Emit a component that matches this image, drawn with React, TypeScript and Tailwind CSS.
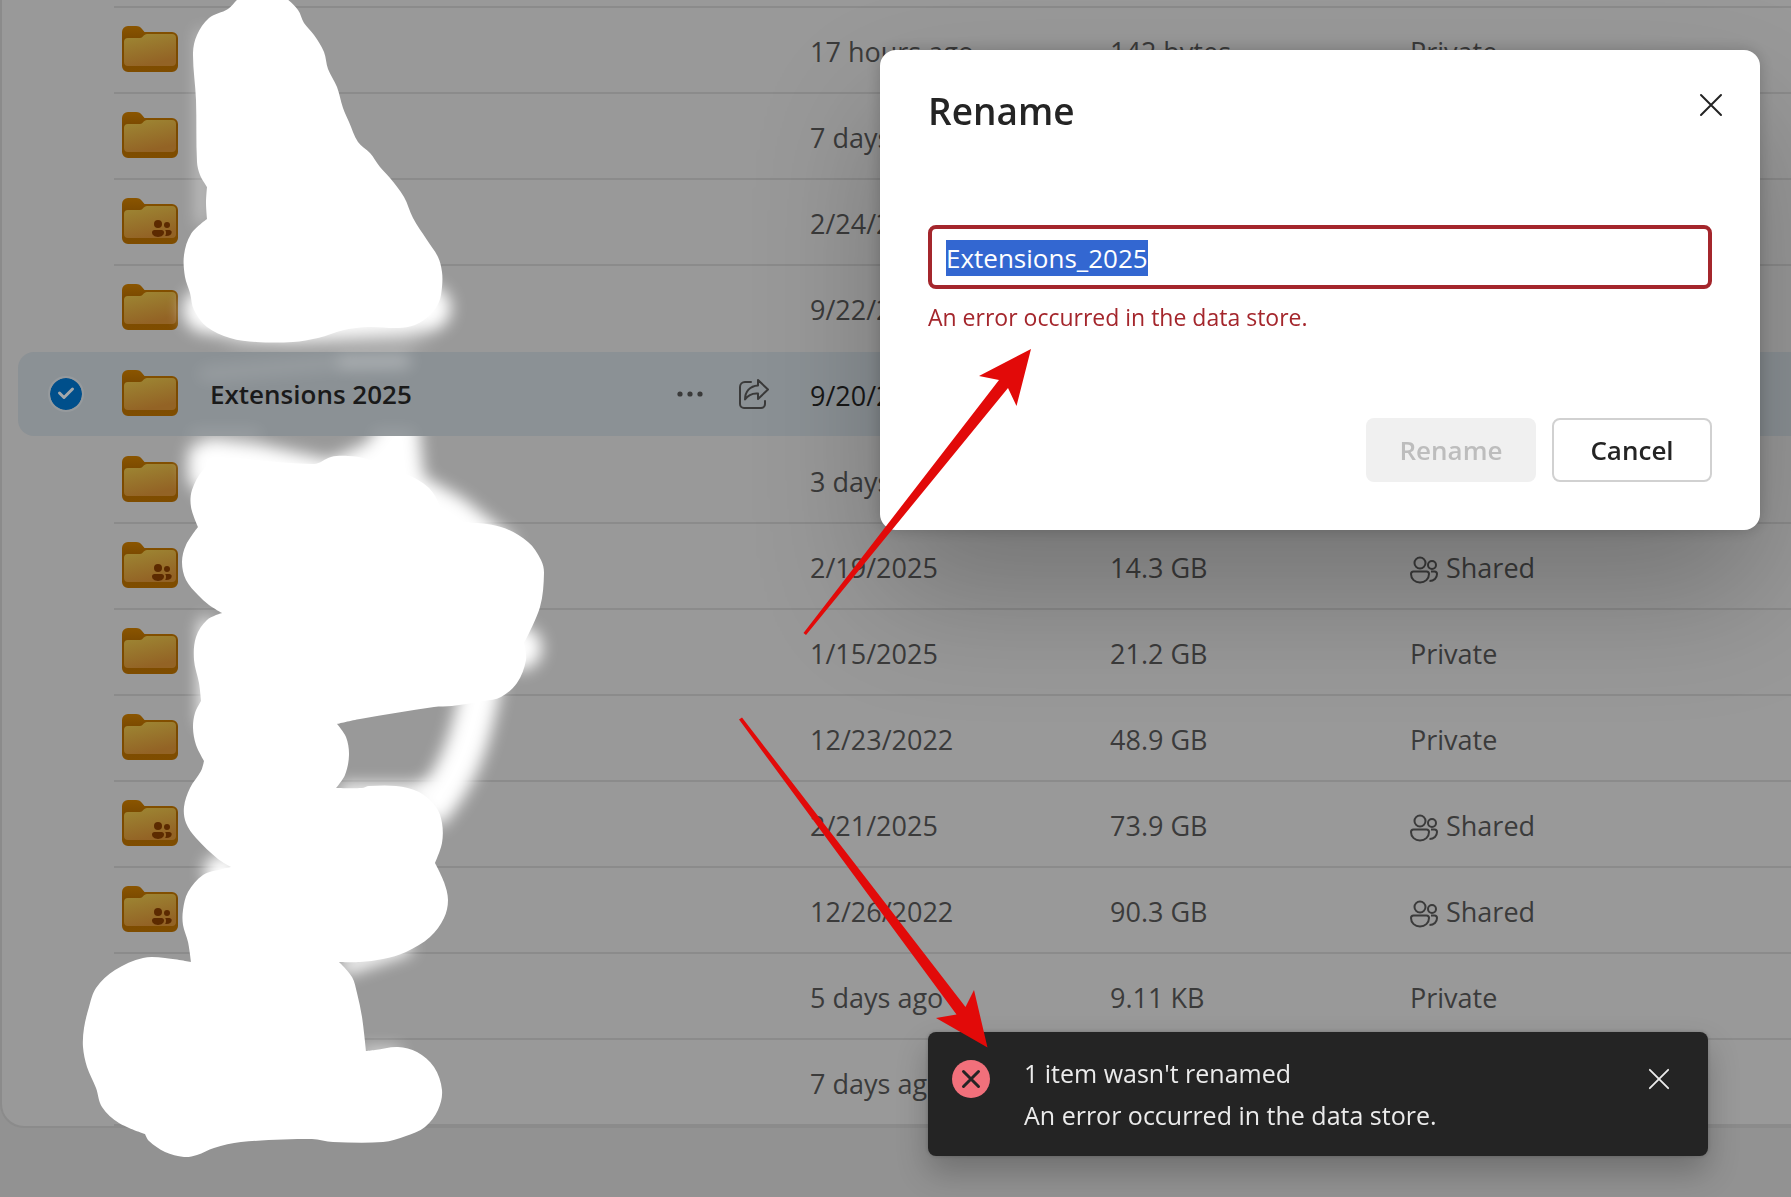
import { useEffect, useRef } from "react";

type Row = {
  name?: string;
  modified: string;
  size?: string;
  sharing?: "Private" | "Shared";
  shared?: boolean;
  selected?: boolean;
  covered?: boolean;
};

const rows: Row[] = [
  { modified: "17 hours ago", size: "142 bytes", sharing: "Private" },
  { modified: "7 days ago" },
  { modified: "2/24/2025", shared: true },
  { modified: "9/22/2025" },
  { name: "Extensions 2025", modified: "9/20/2025", selected: true },
  { modified: "3 days ago" },
  { modified: "2/19/2025", size: "14.3 GB", sharing: "Shared", shared: true },
  { modified: "1/15/2025", size: "21.2 GB", sharing: "Private" },
  { modified: "12/23/2022", size: "48.9 GB", sharing: "Private" },
  { modified: "2/21/2025", size: "73.9 GB", sharing: "Shared", shared: true },
  { modified: "12/26/2022", size: "90.3 GB", sharing: "Shared", shared: true },
  { modified: "5 days ago", size: "9.11 KB", sharing: "Private", covered: true },
  { modified: "7 days ago", covered: true },
];

type Point = [number, number];

const upperBlob: Point[] = [
  [228, 9], [241, -3], [263, -8], [285, -2], [298, 10], [304, 23], [314, 35], [324, 52], [328, 69], [337, 87],
  [343, 108], [349, 122], [358, 142], [370, 153], [380, 167], [390, 178], [404, 197], [413, 218], [427, 240],
  [438, 257], [442, 272], [442, 287], [439, 302], [430, 315], [415, 325], [398, 328], [369, 327], [344, 330],
  [318, 338], [293, 342], [256, 342], [230, 338], [207, 327], [194, 310], [190, 293], [185, 277], [184, 255],
  [191, 234], [207, 219], [206, 203], [207, 187], [200, 175], [197, 162], [196, 100], [193, 53], [197, 35],
  [209, 18],
];

const lowerBlob: Point[] = [
  [230, 458], [314, 464], [331, 457], [348, 456], [367, 459], [383, 468], [406, 474], [429, 488], [440, 507],
  [442, 522], [463, 522], [501, 527], [528, 542], [541, 560], [544, 573], [540, 607], [524, 643], [526, 660],
  [517, 683], [501, 697], [484, 701], [452, 706], [434, 707], [360, 719], [337, 724], [346, 737], [349, 755],
  [345, 775], [336, 788], [362, 788], [369, 786], [396, 786], [419, 792], [436, 807], [442, 823], [442, 843],
  [435, 863], [444, 882], [448, 900], [444, 918], [430, 937], [406, 952], [383, 959], [360, 962], [339, 962],
  [352, 977], [357, 993], [362, 1017], [366, 1051], [375, 1050], [398, 1047], [417, 1052], [434, 1067],
  [442, 1090], [438, 1110], [425, 1127], [406, 1136], [383, 1142], [333, 1142], [312, 1139], [241, 1142],
  [214, 1148], [197, 1155], [184, 1157], [165, 1152], [149, 1141], [145, 1134], [119, 1123], [102, 1107],
  [96, 1088], [87, 1067], [83, 1047], [84, 1028], [89, 1007], [96, 988], [115, 970], [143, 958], [165, 958],
  [191, 962], [188, 942], [183, 925], [183, 910], [188, 892], [203, 875], [222, 869], [231, 867], [218, 859],
  [196, 838], [186, 823], [184, 807], [190, 788], [201, 771], [204, 761], [196, 745], [193, 728], [195, 713],
  [201, 701], [199, 683], [194, 660], [196, 637], [207, 620], [222, 613], [209, 605], [198, 595], [186, 580],
  [182, 562], [186, 545], [198, 527], [191, 507], [192, 490], [203, 470], [218, 460],
];

/* Closed curve through every point; sharp inward notches stay as corners. */
function smoothPath(points: Point[]) {
  const n = points.length;
  const at = (i: number) => points[(i + n) % n];
  const tangent = (i: number): Point => {
    const [a, b, c] = [at(i - 1), at(i), at(i + 1)];
    const [ux, uy, vx, vy] = [b[0] - a[0], b[1] - a[1], c[0] - b[0], c[1] - b[1]];
    const turn = Math.atan2(ux * vy - uy * vx, ux * vx + uy * vy);
    if (turn < -0.5) return [0, 0];
    const l = Math.hypot(c[0] - a[0], c[1] - a[1]) || 1;
    return [(c[0] - a[0]) / l, (c[1] - a[1]) / l];
  };
  let d = `M${points[0][0]} ${points[0][1]}`;
  for (let i = 0; i < n; i++) {
    const [p1, p2] = [at(i), at(i + 1)];
    const k = Math.hypot(p2[0] - p1[0], p2[1] - p1[1]) / 3;
    const [t1, t2] = [tangent(i), tangent(i + 1)];
    d += `C${p1[0] + t1[0] * k} ${p1[1] + t1[1] * k} ${p2[0] - t2[0] * k} ${p2[1] - t2[1] * k} ${p2[0]} ${p2[1]}`;
  }
  return d + "Z";
}

function FolderIcon({ shared }: { shared?: boolean }) {
  return (
    <svg width="56" height="46" viewBox="0 0 56 46" aria-hidden="true" className="mb-0.5 shrink-0">
      <defs>
        <linearGradient id="folder-front" x1="0" y1="0" x2="0.35" y2="1">
          <stop offset="0" stopColor="#9e8834" />
          <stop offset="1" stopColor="#936325" />
        </linearGradient>
        <linearGradient id="folder-back" x1="0" y1="0" x2="0" y2="1">
          <stop offset="0" stopColor="#8a5500" />
          <stop offset="0.3" stopColor="#7a4900" />
          <stop offset="1" stopColor="#7f4d00" />
        </linearGradient>
      </defs>
      <path d="M0 6a6 6 0 0 1 6-6h8c3 0 4.6 1 6 3l2.5 3H50a6 6 0 0 1 6 6v28a6 6 0 0 1-6 6H6a6 6 0 0 1-6-6z" fill="url(#folder-back)" />
      <path d="M2 16a4 4 0 0 1 4-4h12c3 0 3.5-4 7-4h25a4 4 0 0 1 4 4v28H54v-4a4 4 0 0 1-4 4H6a4 4 0 0 1-4-4z" fill="url(#folder-front)" />
      {shared && (
        <g fill="#5c2a00">
          <circle cx="36" cy="26" r="4" />
          <circle cx="45" cy="27" r="3" />
          <path d="M32.5 32h7c1.500 0 2.500 1 2.500 2.300C42 37 39.500 39 36 39s-6-2-6-4.700C30 33 31 32 32.500 32z" />
          <path d="M43.2 32h4c1.500 0 2.500 1 2.500 2.200 0 2.300-2 3.800-5.500 3.800h-1c1-1.800 1.300-4 0-6z" />
        </g>
      )}
    </svg>
  );
}

function PeopleIcon() {
  return (
    <svg width="28" height="28" viewBox="0 0 28 28" fill="none" stroke="currentColor" strokeWidth="2" aria-hidden="true" className="mt-1">
      <circle cx="10" cy="7" r="5.5" />
      <circle cx="22" cy="9" r="4" />
      <path d="M3.500 15.500h13c1.500 0 2.500 1 2.500 2.500 0 5-4 8.500-9 8.500s-9-3.500-9-8.500c0-1.500 1-2.500 2.500-2.500z" />
      <path d="M21 15.500h3.500c1.500 0 2.500 1 2.500 2.500 0 4-3 7-7.500 7" />
    </svg>
  );
}

function CloseIcon({ size }: { size: number }) {
  return (
    <svg width={size} height={size} viewBox="0 0 24 24" fill="none" stroke="currentColor" strokeWidth="2" strokeLinecap="round" aria-hidden="true">
      <path d="M2 2l20 20M22 2L2 22" />
    </svg>
  );
}

function RowActions() {
  return (
    <div className="ml-auto flex items-center gap-[34px] pr-10 text-[#3a3a3a]">
      <button type="button" aria-label="More actions">
        <svg width="28" height="28" viewBox="0 0 28 28" fill="currentColor" aria-hidden="true">
          <circle cx="4" cy="14" r="2.6" />
          <circle cx="14" cy="14" r="2.6" />
          <circle cx="24" cy="14" r="2.6" />
        </svg>
      </button>
      <button type="button" aria-label="Share">
        <svg width="32" height="32" viewBox="0 0 32 32" fill="none" stroke="currentColor" strokeWidth="2" strokeLinecap="round" strokeLinejoin="round" aria-hidden="true">
          <path d="M13 4H7a5 5 0 0 0-5 5v17a4 4 0 0 0 4 4h17a4 4 0 0 0 4-4v-3" />
          <path d="M20 2l10 9.500L20 21v-5.500c-6-.5-10 1.500-13 6C7 13.500 12 8 20 7.500z" />
        </svg>
      </button>
    </div>
  );
}

function FileRow({ row }: { row: Row }) {
  const line = row.selected || row.modified === "9/22/2025" ? "border-transparent" : "border-[#8b8b8b]";
  const cell = `h-[86px] border-b-2 bg-clip-padding ${line} ${row.selected ? "bg-[#8b9195] text-[#171717]" : ""}`;
  return (
    <tr>
      <td className="h-[86px] p-0 pb-0.5 pl-4">
        {row.selected && (
          <div className="flex h-[84px] items-center rounded-l-2xl bg-[#8b9195] pl-8">
            <label className="relative block size-8 rounded-full">
              <input
                type="checkbox"
                defaultChecked
                aria-label="Select Extensions 2025"
                className="block size-8 appearance-none rounded-full bg-[#004f8b] outline-2 outline-[#969a9d]"
              />
              <svg width="32" height="32" viewBox="0 0 32 32" fill="none" stroke="#a3a8ab" strokeWidth="3" strokeLinecap="round" strokeLinejoin="round" className="pointer-events-none absolute inset-0" aria-hidden="true">
                <path d="M9.500 15l4.500 4.500L22.500 11" />
              </svg>
            </label>
          </div>
        )}
      </td>
      <td className={`${cell} p-0`}>
        <div className="flex items-center pl-2">
          {!row.covered && <FolderIcon shared={row.shared} />}
          {row.name && <span className="pl-8 text-[26px] leading-9 font-semibold whitespace-nowrap text-[#1a1a1a]">{row.name}</span>}
          {row.selected && <RowActions />}
        </div>
      </td>
      <td className={`${cell} p-0 pt-1`}>{row.modified}</td>
      <td className={`${cell} p-0 pt-1`}>{row.size}</td>
      <td className={`${cell} p-0 pt-1`}>
        <span className="flex items-center gap-2">
          {row.sharing === "Shared" && <PeopleIcon />}
          {row.sharing}
        </span>
      </td>
    </tr>
  );
}

function FileList() {
  return (
    <section className="overflow-hidden rounded-bl-3xl border-b-2 border-l-2 border-[#8b8b8b] bg-[#999999]">
      <table className="w-full table-fixed border-separate border-spacing-0 text-left text-[27px] leading-9 text-[#3b3b3b]">
        <colgroup>
          <col className="w-[112px]" />
          <col />
          <col className="w-[300px]" />
          <col className="w-[300px]" />
          <col className="w-[381px]" />
        </colgroup>
        <tbody>
          <tr>
            <td className="h-2 p-0" />
            <td colSpan={4} className="h-2 border-b-2 border-[#8b8b8b] p-0" />
          </tr>
          {rows.map((row, i) => (
            <FileRow key={i} row={row} />
          ))}
        </tbody>
      </table>
    </section>
  );
}

function RenameDialog() {
  const input = useRef<HTMLInputElement>(null);
  useEffect(() => {
    input.current?.focus();
    input.current?.select();
  }, []);
  return (
    <div className="fixed inset-0 flex items-start justify-end pt-[50px] pr-[31px]">
      <form
        role="dialog"
        aria-labelledby="rename-title"
        className="flex w-[880px] flex-col rounded-2xl bg-white p-12 pt-[31px] text-[#242424] shadow-[0_0_16px_rgba(0,0,0,0.2),0_64px_128px_rgba(0,0,0,0.24)]"
      >
        <div className="flex items-start justify-between">
          <h1 id="rename-title" className="pt-1 text-[37px] leading-[52px] font-semibold">Rename</h1>
          <button type="button" aria-label="Close" className="-mr-[23px] p-3">
            <CloseIcon size={24} />
          </button>
        </div>
        <label htmlFor="new-name" className="sr-only">New name</label>
        <input
          id="new-name"
          ref={input}
          defaultValue="Extensions_2025"
          aria-invalid="true"
          aria-describedby="rename-error"
          className="mt-[88px] h-16 w-full rounded-lg border-4 border-[#a4262c] px-3.5 pt-0.5 text-[26px] outline-none selection:bg-[#3367d1] selection:text-white"
        />
        <p id="rename-error" className="mt-2.5 text-[23px] leading-9 text-[#a4262c]">An error occurred in the data store.</p>
        <div className="mt-[83px] flex justify-end gap-4 text-[26px] font-semibold">
          <button type="button" disabled className="h-16 w-[170px] rounded-lg bg-[#f0f0f0] text-[#bdbdbd]">Rename</button>
          <button type="button" className="h-16 w-40 rounded-lg border-2 border-[#d1d1d1] bg-white">Cancel</button>
        </div>
      </form>
    </div>
  );
}

function Toast() {
  return (
    <div role="alert" className="fixed right-[83px] bottom-[41px] flex w-[780px] items-start rounded-lg bg-[#242424] px-6 py-5 text-[25px] leading-[42px] text-[#ebebeb] shadow-[0_0_4px_rgba(0,0,0,0.2),0_16px_32px_rgba(0,0,0,0.24)]">
      <svg width="38" height="38" viewBox="0 0 38 38" aria-hidden="true" className="mt-2">
        <circle cx="19" cy="19" r="19" fill="#f1707b" />
        <path d="M11.500 11.500l15 15M26.500 11.500l-15 15" stroke="#242424" strokeWidth="3" strokeLinecap="round" />
      </svg>
      <div className="flex-1 pl-[34px]">
        <p>1 item wasn't renamed</p>
        <p>An error occurred in the data store.</p>
      </div>
      <button type="button" aria-label="Dismiss" className="mt-4 mr-3.5">
        <CloseIcon size={22} />
      </button>
    </div>
  );
}

function Annotations() {
  return (
    <svg width="1100" height="1197" viewBox="0 0 1100 1197" className="pointer-events-none fixed top-0 left-0" aria-hidden="true">
      <defs>
        <filter id="soft" filterUnits="userSpaceOnUse" x="0" y="-50" width="700" height="1300">
          <feGaussianBlur stdDeviation="8" />
        </filter>
        <filter id="haze" filterUnits="userSpaceOnUse" x="0" y="-50" width="700" height="1300">
          <feGaussianBlur stdDeviation="12" />
        </filter>
        <clipPath id="above-selection">
          <rect x="0" y="0" width="1100" height="352" />
        </clipPath>
        <clipPath id="below-selection">
          <rect x="0" y="436" width="1100" height="761" />
        </clipPath>
      </defs>
      <g clipPath="url(#above-selection)">
        <path d="M206 310L290 316L428 308" fill="none" stroke="#fff" strokeWidth="46" strokeLinecap="round" strokeLinejoin="round" filter="url(#soft)" />
        <path d="M202 30V225" stroke="#fff" strokeWidth="10" opacity="0.5" filter="url(#soft)" />
        <path d="M230 330H420" stroke="#fff" strokeWidth="24" opacity="0.5" filter="url(#haze)" />
      </g>
      <path d="M345 362L405 361" stroke="#fff" strokeWidth="12" opacity="0.35" strokeLinecap="round" filter="url(#soft)" />
      <path d="M205 374L340 362" stroke="#fff" strokeWidth="14" opacity="0.12" strokeLinecap="round" filter="url(#soft)" />
      <path d="M190 436H260M372 436H415" stroke="#fff" strokeWidth="12" opacity="0.15" filter="url(#soft)" />
      <g clipPath="url(#below-selection)">
        <path d="M190 450L210 440L260 446L330 462L368 444L386 420L416 420L422 478L462 500L515 542L440 560L260 520L210 500L190 480Z" fill="#fff" stroke="#fff" strokeWidth="4" strokeLinejoin="round" filter="url(#soft)" />
        <circle cx="520" cy="648" r="22" fill="#fff" filter="url(#soft)" />
        <path d="M482 680C473 730 462 775 425 814" fill="none" stroke="#fff" strokeWidth="40" filter="url(#soft)" />
        <path d="M340 792H440" stroke="#fff" strokeWidth="16" filter="url(#soft)" />
        <path d="M206 625V720" stroke="#fff" strokeWidth="14" strokeLinecap="round" filter="url(#soft)" />
        <circle cx="222" cy="872" r="18" fill="#fff" filter="url(#soft)" />
        <path d="M342 968L410 945" stroke="#fff" strokeWidth="16" filter="url(#soft)" />
        <path d="M362 1053H400" stroke="#fff" strokeWidth="8" filter="url(#soft)" />
      </g>
      <path d={smoothPath(upperBlob)} fill="#fff" />
      <path d={smoothPath(lowerBlob)} fill="#fff" />
      <g fill="#e20a09">
        <path d="M1031 349L1016.500 406L1008 388L806 635L803.500 633L999 380L979 376Z" />
        <path d="M987.500 1047.500L936 1018L956.500 1014.500L739 719.500L742 717.500L965.500 1007L974 990Z" />
      </g>
    </svg>
  );
}

export default function App() {
  return (
    <main className="min-h-screen bg-[#929292] font-['Open_Sans','Noto_Sans',sans-serif]">
      <FileList />
      <RenameDialog />
      <Toast />
      <Annotations />
    </main>
  );
}
